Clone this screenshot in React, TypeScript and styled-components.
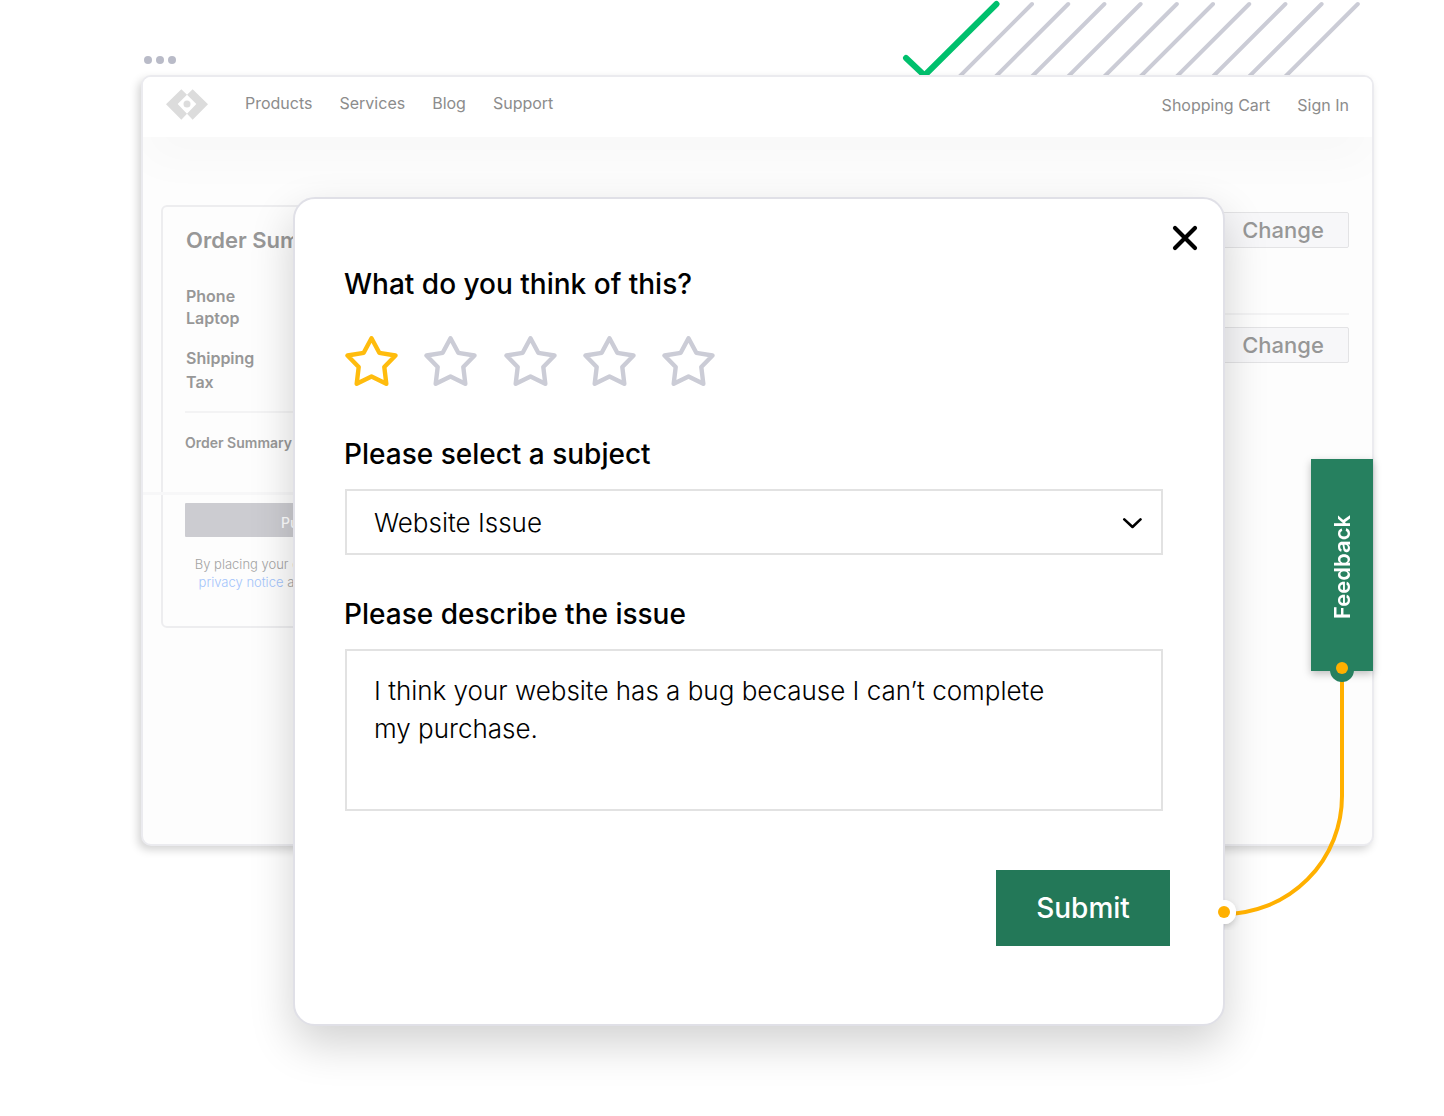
import React, { useState } from 'react';
import styled, { createGlobalStyle } from 'styled-components';

const GlobalStyle = createGlobalStyle`
  *, *::before, *::after { box-sizing: border-box; }
  body {
    margin: 0;
    background: #fff;
    color: #000;
    font-family: Inter, 'Liberation Sans', sans-serif;
  }
  button, select, textarea { font-family: inherit; }
  h1, h2, p, ul { margin: 0; padding: 0; }
`;

const Page = styled.div`
  display: flex;
  flex-direction: column;
  min-height: 100vh;
  padding: 0 70px 88px 141px;
`;

const TopStrip = styled.div`
  display: flex;
  justify-content: space-between;
  align-items: flex-end;
  height: 75px;
  padding: 0 12px 0 3px;
`;

const Dots = styled.div`
  display: flex;
  gap: 4px;
  padding-bottom: 11px;
`;

const Dot = styled.span`
  width: 8px;
  height: 8px;
  border-radius: 50%;
  background: #b9bbc8;
`;

const Stage = styled.div`
  position: relative;
  display: grid;
  align-items: start;
`;

const Frame = styled.div`
  grid-area: 1 / 1;
  position: relative;
  min-height: 771px;
  overflow: hidden;
  border: 2px solid #ebebef;
  border-radius: 10px;
  background: #fdfdfd;
  box-shadow: -3px 4px 8px rgba(0, 0, 0, 0.17);
`;

const SiteHeader = styled.header`
  position: relative;
  display: flex;
  align-items: center;
  height: 60px;
  padding: 0 23px;
  background: #fff;
  box-shadow: 0 24px 48px rgba(0, 0, 0, 0.025);
`;

const Nav = styled.nav<{ $push?: boolean }>`
  display: flex;
  gap: 27px;
  margin-left: ${(p) => (p.$push ? 'auto' : '37px')};
  padding-bottom: ${(p) => (p.$push ? '4px' : '8px')};
`;

const NavLink = styled.a`
  color: #8c8c8c;
  font-size: 16px;
  line-height: 20px;
  text-decoration: none;
`;

const Logo = styled.svg`
  display: block;
  width: 42px;
  height: 31px;
  margin-bottom: 6px;
`;

const Columns = styled.div`
  position: relative;
  display: flex;
  justify-content: space-between;
  align-items: flex-start;
  padding: 68px 23px 0 18px;
`;

const SplitLine = styled.div`
  position: absolute;
  top: 415px;
  left: 0;
  width: 320px;
  height: 3px;
  background: #f7f7f8;
`;

const Summary = styled.section`
  width: 304px;
  padding: 19px 23px 35px 22px;
  border: 2px solid #ededef;
  border-radius: 6px;
  color: #979797;
`;

const SummaryTitle = styled.h2`
  margin-bottom: 31px;
  padding-left: 1px;
  font-size: 22px;
  font-weight: 600;
  line-height: 28px;
`;

const Items = styled.ul<{ $gap?: number }>`
  display: flex;
  flex-direction: column;
  gap: ${(p) => p.$gap ?? 0}px;
  margin-bottom: 18px;
  padding-left: 1px;
  list-style: none;
  font-size: 16px;
  font-weight: 600;
  line-height: 22px;
`;

const Rule = styled.hr`
  height: 2px;
  margin: 0 0 20px;
  border: 0;
  background: #f3f3f4;
`;

const Total = styled.p`
  margin-bottom: 50px;
  font-size: 14px;
  font-weight: 600;
  line-height: 20px;
`;

const Purchase = styled.button`
  display: block;
  width: 100%;
  height: 34px;
  margin-bottom: 18px;
  padding: 4px 0 0;
  border: 0;
  border-radius: 1px;
  background: #ccccd1;
  color: #fff;
  font-size: 14px;
  font-weight: 500;
`;

const Legal = styled.p`
  color: #a3a3a3;
  font-size: 13px;
  font-weight: 300;
  line-height: 18px;
  text-align: center;
  white-space: nowrap;
`;

const LegalLink = styled.a`
  color: #a3c4fb;
  text-decoration: none;
`;

const Changes = styled.div`
  display: flex;
  flex-direction: column;
  align-items: flex-end;
  width: 300px;
  padding-top: 7px;
`;

const ChangeButton = styled.button`
  width: 132px;
  height: 36px;
  padding: 0;
  border: 1px solid #e3e3e5;
  border-radius: 2px;
  background: #f7f7f9;
  color: #979797;
  font-size: 22px;
  font-weight: 500;
  line-height: 28px;
`;

const ChangeRule = styled(Rule)`
  width: 100%;
  margin: 65px 0 12px;
`;

const Modal = styled.form`
  grid-area: 1 / 1;
  position: relative;
  z-index: 1;
  display: flex;
  flex-direction: column;
  margin: 122px 149px 0 152px;
  padding: 67px 53px 78px 49px;
  border: 2px solid #e0e0e7;
  border-radius: 22px;
  background: #fff;
  box-shadow: 0 18px 44px rgba(0, 0, 0, 0.18);
`;

const CloseButton = styled.button`
  position: absolute;
  top: 26px;
  right: 25px;
  display: flex;
  padding: 0;
  border: 0;
  background: none;
  cursor: pointer;
`;

const Question = styled.h1`
  font-size: 28px;
  font-weight: 500;
  line-height: 36px;
`;

const Label = styled.label`
  font-size: 28px;
  font-weight: 500;
  line-height: 36px;
`;

const Stars = styled.div`
  display: flex;
  justify-content: space-between;
  width: 370px;
  margin: 34px 0 50px 1px;
`;

const StarLabel = styled.label<{ $on: boolean }>`
  position: relative;
  display: flex;
  color: ${(p) => (p.$on ? '#ffbc0d' : '#cbccd6')};
  cursor: pointer;
`;

const StarInput = styled.input`
  position: absolute;
  inset: 0;
  width: 100%;
  height: 100%;
  margin: 0;
  opacity: 0;
  cursor: pointer;
`;

const SelectBox = styled.div`
  position: relative;
  display: flex;
  align-items: center;
  margin: 17px 7px 41px 1px;
`;

const Select = styled.select`
  appearance: none;
  width: 100%;
  height: 66px;
  padding: 0 60px 0 27px;
  border: 2px solid #e2e2e2;
  border-radius: 0;
  background: #fff;
  color: #000;
  font-size: 26px;
  font-weight: 300;
`;

const Chevron = styled.svg`
  position: absolute;
  right: 21px;
  pointer-events: none;
`;

const TextArea = styled.textarea`
  height: 162px;
  margin: 17px 7px 59px 1px;
  padding: 21px 96px 0 27px;
  border: 2px solid #e2e2e2;
  border-radius: 0;
  background: #fff;
  color: #000;
  font-size: 26px;
  font-weight: 300;
  line-height: 38px;
  resize: none;
`;

const Submit = styled.button`
  align-self: flex-end;
  width: 174px;
  height: 76px;
  padding: 0;
  border: 0;
  background: #237858;
  color: #fff;
  font-size: 28px;
  font-weight: 500;
  cursor: pointer;
`;

const FeedbackTab = styled.button`
  position: absolute;
  top: 384px;
  right: 1px;
  display: flex;
  align-items: center;
  justify-content: center;
  width: 62px;
  height: 212px;
  padding: 4px 0 0;
  border: 0;
  background: #26805f;
  box-shadow: 0 3px 8px rgba(0, 0, 0, 0.25);
  color: #fff;
  font-size: 22px;
  font-weight: 600;
  cursor: pointer;
`;

const TabText = styled.span`
  writing-mode: vertical-rl;
  transform: rotate(180deg);
`;

const Connector = styled.svg`
  position: absolute;
  top: 575px;
  right: 4px;
  z-index: 2;
  pointer-events: none;
`;

function CheckStripes() {
  const slants = Array.from({ length: 10 }, (_, i) => 130 + i * 36.2);
  return (
    <svg width="460" height="75" viewBox="0 0 460 75" fill="none" strokeLinecap="round" aria-hidden="true">
      {slants.map((x) => (
        <path key={x} d={`M${x} 4 L${x - 76} 80`} stroke="#cbccd6" strokeWidth="4" />
      ))}
      <path d="M4 58 L22.500 75.500 L94.500 4" stroke="#00c06d" strokeWidth="6" strokeLinejoin="round" />
    </svg>
  );
}

function StarIcon() {
  return (
    <svg width="53" height="50" viewBox="0 0 53 50" fill="none" aria-hidden="true">
      <path
        d="M26.500 2.300 L34.300 16.800 L50.500 19.500 L39.300 31 L41.300 47.700 L26.500 40.500 L11.700 47.700 L13.700 31 L2.500 19.500 L18.700 16.800 Z"
        stroke="currentColor"
        strokeWidth="4.400"
        strokeLinejoin="round"
      />
    </svg>
  );
}

export default function App() {
  const [rating, setRating] = useState(1);
  return (
    <>
      <GlobalStyle />
      <Page>
        <TopStrip>
          <Dots>
            <Dot />
            <Dot />
            <Dot />
          </Dots>
          <CheckStripes />
        </TopStrip>
        <Stage>
          <Frame>
            <SiteHeader>
              <Logo viewBox="107 146 126 91" fill="#dcdcdc" role="img" aria-label="Home">
                <path d="M153 146 L170 162 L142 190 L170 219 L153 237 L107 191 Z" />
                <path d="M187 146 L233 191 L187 237 L170 219 L198 190 L170 162 Z" />
                <circle cx="170" cy="190" r="10.500" />
              </Logo>
              <Nav>
                <NavLink href="#products">Products</NavLink>
                <NavLink href="#services">Services</NavLink>
                <NavLink href="#blog">Blog</NavLink>
                <NavLink href="#support">Support</NavLink>
              </Nav>
              <Nav $push>
                <NavLink href="#cart">Shopping Cart</NavLink>
                <NavLink href="#sign-in">Sign In</NavLink>
              </Nav>
            </SiteHeader>
            <Columns>
              <Summary>
                <SummaryTitle>Order Summary</SummaryTitle>
                <Items>
                  <li>Phone</li>
                  <li>Laptop</li>
                </Items>
                <Items $gap={2}>
                  <li>Shipping</li>
                  <li>Tax</li>
                </Items>
                <Rule />
                <Total>Order Summary</Total>
                <Purchase type="button">Purchase</Purchase>
                <Legal>
                  By placing your order, you agree to our
                  <br />
                  <LegalLink href="#privacy">privacy notice</LegalLink> and conditions of trade
                </Legal>
              </Summary>
              <Changes>
                <ChangeButton type="button">Change</ChangeButton>
                <ChangeRule />
                <ChangeButton type="button">Change</ChangeButton>
              </Changes>
            </Columns>
            <SplitLine />
          </Frame>

          <FeedbackTab type="button">
            <TabText>Feedback</TabText>
          </FeedbackTab>

          <Modal onSubmit={(e) => e.preventDefault()}>
            <CloseButton type="button" aria-label="Close">
              <svg width="26" height="26" viewBox="0 0 26 26" fill="none" stroke="#000" strokeWidth="4.200" strokeLinecap="round">
                <path d="M3 3 L23 23 M23 3 L3 23" />
              </svg>
            </CloseButton>
            <Question id="question">What do you think of this?</Question>
            <Stars role="radiogroup" aria-labelledby="question">
              {[1, 2, 3, 4, 5].map((n) => (
                <StarLabel key={n} $on={n <= rating}>
                  <StarInput
                    type="radio"
                    name="rating"
                    value={n}
                    checked={n === rating}
                    onChange={() => setRating(n)}
                    aria-label={`${n} of 5`}
                  />
                  <StarIcon />
                </StarLabel>
              ))}
            </Stars>
            <Label htmlFor="subject">Please select a subject</Label>
            <SelectBox>
              <Select id="subject" defaultValue="website">
                <option value="website">Website Issue</option>
              </Select>
              <Chevron width="20" height="16" viewBox="0 0 20 16" fill="none" stroke="#000" strokeWidth="2.600" strokeLinecap="round" strokeLinejoin="round">
                <path d="M2.300 5.400 L10.500 13 L18.500 5.400" />
              </Chevron>
            </SelectBox>
            <Label htmlFor="issue">Please describe the issue</Label>
            <TextArea
              id="issue"
              defaultValue="I think your website has a bug because I can’t complete my purchase."
            />
            <Submit type="submit">Submit</Submit>
          </Modal>

          <Connector width="160" height="280" viewBox="0 0 160 280" fill="none" aria-hidden="true">
            <defs>
              <filter id="knob" x="-50%" y="-50%" width="200%" height="200%">
                <feDropShadow dx="0" dy="3" stdDeviation="3" floodColor="#000" floodOpacity="0.16" />
              </filter>
              <clipPath id="outside">
                <rect x="14" y="240" width="40" height="40" />
              </clipPath>
            </defs>
            <path d="M132 20 V146 A118 118 0 0 1 14 264" stroke="#ffb000" strokeWidth="4" />
            <path d="M120 20 A12 12 0 0 0 144 20 Z" fill="#26805f" />
            <circle cx="132" cy="18" r="6" fill="#ffb000" />
            <g clipPath="url(#outside)">
              <circle cx="14" cy="262" r="12" fill="#fff" filter="url(#knob)" />
            </g>
            <circle cx="14" cy="262" r="12" fill="#fff" />
            <circle cx="14" cy="262" r="6" fill="#ffb000" />
          </Connector>
        </Stage>
      </Page>
    </>
  );
}
